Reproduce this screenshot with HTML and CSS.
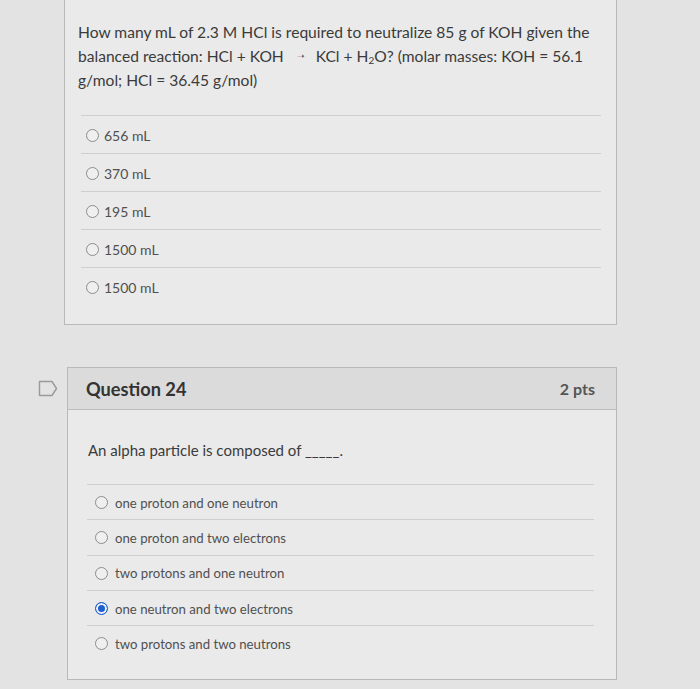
FILE: index.html
```html
<!DOCTYPE html>
<html>
<head>
<meta charset="utf-8">
<link rel="stylesheet" href="styles.css">
</head>
<body>
<div class="page">
  <section class="card card-prev">
    <div class="q-text">How many mL of 2.3 M HCl is required to neutralize 85 g of KOH given the balanced reaction: HCl + KOH <span class="arrow">&#10141;</span> KCl + H<sub>2</sub>O? (molar masses: KOH = 56.1 g/mol; HCl = 36.45 g/mol)</div>
    <ul class="answers">
      <li><span class="radio"></span>656 mL</li>
      <li><span class="radio"></span>370 mL</li>
      <li><span class="radio"></span>195 mL</li>
      <li><span class="radio"></span>1500 mL</li>
      <li><span class="radio"></span>1500 mL</li>
    </ul>
  </section>

  <div class="q-row">
    <div class="flag">
      <svg width="20" height="17" viewBox="0 0 20 17"><path d="M1.5 1.5 H14 L18.5 8.5 L14 15.5 H1.5 Z" fill="none" stroke="#9a9a9a" stroke-width="1.4" stroke-linejoin="round"/></svg>
    </div>
    <section class="card card-q">
      <header class="q-head">
        <span class="q-title">Question 24</span>
        <span class="q-pts">2 pts</span>
      </header>
      <div class="q-body">
        <div class="q-text2">An alpha particle is composed of _____.</div>
        <ul class="answers answers2">
          <li><span class="radio"></span>one proton and one neutron</li>
          <li><span class="radio"></span>one proton and two electrons</li>
          <li><span class="radio"></span>two protons and one neutron</li>
          <li><span class="radio checked"></span>one neutron and two electrons</li>
          <li><span class="radio"></span>two protons and two neutrons</li>
        </ul>
      </div>
    </section>
  </div>
</div>
</body>
</html>
```

FILE: styles.css
```css
* { box-sizing: border-box; }
html, body { margin: 0; padding: 0; }
body {
  background: #e4e3e3;
  font-family: Lato, "Open Sans", sans-serif;
  color: #3a3a3a;
  width: 700px;
  height: 689px;
  overflow: hidden;
}
.page { padding-top: 0; }

.card {
  background: #eaeaea;
  border: 1px solid #b9b9b9;
}

.card-prev {
  margin-top: -6px;
  margin-left: 64px;
  width: 553px;
  padding: 25px 0 19px 0;
}
.q-text {
  padding: 0 6px 0 13px;
  font-size: 15.6px;
  line-height: 24px;
  color: #3b3b3b;
}
.q-text sub { font-size: 10px; vertical-align: -2px; line-height: 1; }
.arrow { font-size: 9px; vertical-align: 3px; margin: 0 7px 0 9px; color: #555; }

.answers {
  list-style: none;
  margin: 23px 15px 0 16px;
  padding: 0;
}
.answers li {
  display: flex;
  align-items: center;
  height: 38px;
  border-top: 1px solid #cfcfcf;
  font-size: 14px;
  color: #505050;
  padding-left: 5px;
  padding-top: 1px;
}
.radio {
  width: 13px;
  height: 13px;
  border-radius: 50%;
  border: 1px solid #8c8c8c;
  background: #efefef;
  margin-right: 5px;
  flex: none;
}

.q-row {
  display: flex;
  align-items: flex-start;
  margin-top: 42px;
}
.flag {
  width: 67px;
  padding: 13px 0 0 38px;
  flex: none;
}
.card-q {
  width: 550px;
}
.q-head {
  display: flex;
  justify-content: space-between;
  align-items: center;
  height: 42px;
  background: #dcdbdb;
  border-bottom: 1px solid #bdbdbd;
  padding: 0 21px 0 18px;
}
.q-title {
  font-size: 18.2px;
  font-weight: 700;
  color: #333;
}
.q-pts {
  font-size: 16px;
  font-weight: 700;
  color: #555;
}
.q-body {
  padding: 29px 0 19px 0;
}
.q-text2 {
  padding-left: 20px;
  font-size: 15px;
  line-height: 22px;
  color: #3b3b3b;
}
.answers2 {
  margin: 23px 22px 0 19px;
}
.answers2 li {
  height: 35.3px;
  font-size: 13.2px;
  padding-left: 8px;
}
.answers2 .radio { margin-right: 7px; }
.radio.checked {
  border: 1.5px solid #1b5fd1;
  background: #1b5fd1;
  box-shadow: inset 0 0 0 2px #f2f2f2;
}
```
